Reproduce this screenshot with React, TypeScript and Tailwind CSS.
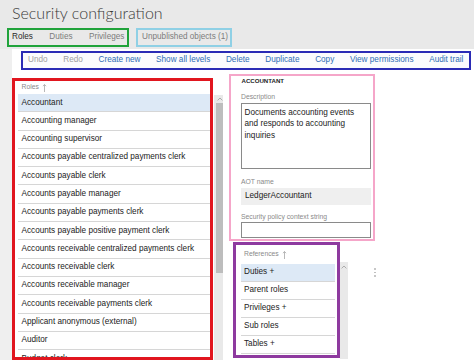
import React from "react";

const roles = [
  "Accountant",
  "Accounting manager",
  "Accounting supervisor",
  "Accounts payable centralized payments clerk",
  "Accounts payable clerk",
  "Accounts payable manager",
  "Accounts payable payments clerk",
  "Accounts payable positive payment clerk",
  "Accounts receivable centralized payments clerk",
  "Accounts receivable clerk",
  "Accounts receivable manager",
  "Accounts receivable payments clerk",
  "Applicant anonymous (external)",
  "Auditor",
  "Budget clerk",
];

const refs = ["Duties +", "Parent roles", "Privileges +", "Sub roles", "Tables +"];

const toolbar: { label: string; disabled?: boolean }[] = [
  { label: "Undo", disabled: true },
  { label: "Redo", disabled: true },
  { label: "Create new" },
  { label: "Show all levels" },
  { label: "Delete" },
  { label: "Duplicate" },
  { label: "Copy" },
  { label: "View permissions" },
  { label: "Audit trail" },
];

function SortArrow() {
  return (
    <svg width="5" height="8" viewBox="0 0 5 8" className="shrink-0">
      <path d="M2.5 8 L2.5 0.6 M0.9 2.2 L2.5 0.6 L4.1 2.2" stroke="#9a9a9a" strokeWidth="0.7" fill="none" />
    </svg>
  );
}

function Caret() {
  return (
    <svg width="6" height="4" viewBox="0 0 6 4">
      <path d="M0.6 3.4 L3 1 L5.4 3.4" stroke="#9c9c9c" strokeWidth="0.8" fill="none" />
    </svg>
  );
}

export default function App() {
  return (
    <div className="w-[474px] h-[360px] overflow-hidden bg-white flex flex-col font-['Liberation_Sans',Arial,sans-serif]">
      {/* Header */}
      <div className="h-[49px] shrink-0 bg-[#e9e9e9]">
        <div className="h-[28px] pl-[12px] pt-[2.5px] font-['Lato','Liberation_Sans',sans-serif] font-light text-[16px] leading-[19px] text-[#3a3a3a] whitespace-nowrap">
          Security configuration
        </div>
        <div className="flex items-start pl-[7px]">
          <div className="h-[19px] w-[122px] border-2 border-[#20a33b] flex items-center pl-[3px] gap-[16.4px] text-[8.2px] whitespace-nowrap">
            <span className="text-[#2a2a2a]">Roles</span>
            <span className="text-[#7c7c7c]">Duties</span>
            <span className="text-[#7c7c7c]">Privileges</span>
          </div>
          <div className="ml-[7px] h-[19px] w-[96px] border-2 border-[#8fd0e5] flex items-center pl-[4px] text-[8.2px] text-[#7c7c7c] whitespace-nowrap">
            Unpublished objects (1)
          </div>
        </div>
      </div>

      {/* Body */}
      <div className="flex flex-1 min-h-0">
        <div className="w-[12px] shrink-0 bg-[#efefef]" />
        <div className="flex-1 flex flex-col min-w-0">
          {/* Toolbar */}
          <div className="mt-[2px] ml-[9px] w-[450px] h-[19px] border-2 border-[#2b2bb5] bg-[#fbfbfd] flex items-center pl-[5px] gap-[15.7px] text-[8.2px] whitespace-nowrap">
            {toolbar.map((t) => (
              <span key={t.label} className={t.disabled ? "text-[#a0a0a0]" : "text-[#2f6db5]"}>
                {t.label}
              </span>
            ))}
          </div>

          {/* Content */}
          <div className="flex items-start mt-[3px]">
            {/* Roles list */}
            <div className="mt-[5px] w-[201px] h-[282px] shrink-0 border-[3px] border-[#e1161f] bg-white flex flex-col overflow-hidden">
              <div className="h-[13px] shrink-0 pl-[6.5px] flex items-center gap-[3px] text-[6.8px] text-[#8a8a8a]">
                <span>Roles</span>
                <SortArrow />
              </div>
              <div className="pl-[3px] flex flex-col">
                {roles.map((r, i) => (
                  <div
                    key={r}
                    className={`h-[18.3px] shrink-0 border-b border-[#d6d6d6] flex items-center pl-[3.5px] text-[8.2px] text-[#222] whitespace-nowrap ${
                      i === 0 ? "bg-[#dde9f6]" : ""
                    }`}
                  >
                    {r}
                  </div>
                ))}
              </div>
            </div>

            {/* Roles scrollbar */}
            <div className="mt-[22px] ml-[1px] w-[9px] h-[265px] shrink-0 bg-[#e9e9e9] flex flex-col">
              <div className="h-[8px] flex items-center justify-center pl-[2px]">
                <Caret />
              </div>
              <div className="ml-[2px] w-[7px] h-[170px] bg-[#bdbdbd]" />
            </div>

            {/* Right column */}
            <div className="ml-[6px] mt-[1px] flex flex-col">
              {/* Details */}
              <div className="w-[146px] h-[167px] border-2 border-[#f5a6c9] pl-[10px] pr-[2px] flex flex-col">
                <div className="h-[9px] leading-[9px] text-[6.1px] font-bold text-[#222] pl-[0.5px]">ACCOUNTANT</div>
                <div className="mt-[7px] h-[9px] leading-[9px] text-[6.8px] text-[#8a8a8a]">Description</div>
                <div className="mt-[2px] h-[66px] border-[1.5px] border-[#8a8a8a] pt-[3px] pl-[2.5px] text-[8.2px] leading-[11.3px] text-[#222] whitespace-nowrap">
                  Documents accounting events
                  <br />
                  and responds to accounting
                  <br />
                  inquiries
                </div>
                <div className="mt-[7.5px] h-[9px] leading-[9px] text-[6.8px] text-[#8a8a8a]">AOT name</div>
                <div className="mt-[2.5px] h-[17px] bg-[#efefef] pl-[4px] flex items-center text-[8.2px] text-[#222]">
                  LedgerAccountant
                </div>
                <div className="mt-[6.5px] h-[9px] leading-[9px] text-[6.8px] text-[#8a8a8a] whitespace-nowrap">
                  Security policy context string
                </div>
                <div className="mt-[1.5px] h-[16px] border border-[#8a8a8a] bg-white" />
              </div>

              {/* References */}
              <div className="flex items-start">
                <div className="ml-[4px] mt-[1px] w-[107px] h-[116px] shrink-0 border-[3px] border-[#8e3a9f] flex flex-col overflow-hidden">
                  <div className="h-[19px] shrink-0 pl-[8px] flex items-center gap-[3px] text-[6.8px] text-[#8a8a8a]">
                    <span>References</span>
                    <SortArrow />
                  </div>
                  <div className="pl-[5px] pr-[2px] flex flex-col">
                    {refs.map((r, i) => (
                      <div
                        key={r}
                        className={`h-[18px] shrink-0 border-b border-[#d6d6d6] flex items-center pl-[3px] text-[8.2px] text-[#222] whitespace-nowrap ${
                          i === 0 ? "bg-[#dde9f6]" : ""
                        }`}
                      >
                        {r}
                      </div>
                    ))}
                  </div>
                </div>
                <div className="mt-[21px] w-[8px] h-[97px] shrink-0 bg-[#e9e9e9] flex justify-center pt-[3px]">
                  <Caret />
                </div>
                <div className="ml-[26px] mt-[27px] flex flex-col gap-[2px]">
                  <div className="w-[1.5px] h-[1.5px] rounded-full bg-[#b5b5b5]" />
                  <div className="w-[1.5px] h-[1.5px] rounded-full bg-[#b5b5b5]" />
                  <div className="w-[1.5px] h-[1.5px] rounded-full bg-[#b5b5b5]" />
                </div>
              </div>
            </div>
          </div>
        </div>
      </div>
    </div>
  );
}
